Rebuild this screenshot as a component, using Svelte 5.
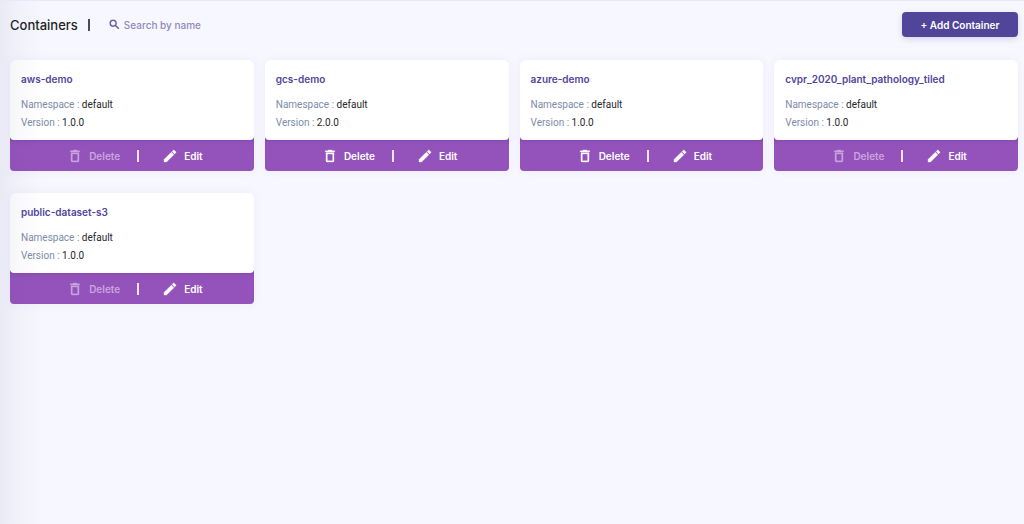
<script lang="ts">
  type Container = {
    name: string;
    namespace: string;
    version: string;
    locked: boolean;
  };

  const containers: Container[] = [
    { name: 'aws-demo', namespace: 'default', version: '1.0.0', locked: true },
    { name: 'gcs-demo', namespace: 'default', version: '2.0.0', locked: false },
    { name: 'azure-demo', namespace: 'default', version: '1.0.0', locked: false },
    { name: 'cvpr_2020_plant_pathology_tiled', namespace: 'default', version: '1.0.0', locked: true },
    { name: 'public-dataset-s3', namespace: 'default', version: '1.0.0', locked: true }
  ];

  let search = $state('');
  let visible = $derived(containers.filter((c) => c.name.includes(search.trim().toLowerCase())));
</script>

<main>
  <header>
    <h1>Containers</h1>
    <span class="bar"></span>
    <label class="search">
      <svg viewBox="0 0 24 24" aria-hidden="true">
        <path d="M15.5 14h-.79l-.28-.27A6.47 6.47 0 0 0 16 9.5 6.5 6.5 0 1 0 9.5 16c1.61 0 3.09-.59 4.23-1.57l.27.28v.79l5 4.99L20.49 19l-4.99-5zm-6 0C7.01 14 5 11.99 5 9.5S7.01 5 9.5 5 14 7.01 14 9.5 11.99 14 9.5 14z" />
      </svg>
      <input type="text" placeholder="Search by name" aria-label="Search by name" bind:value={search}>
    </label>
    <button type="button" class="add">+ Add Container</button>
  </header>

  <section class="grid">
    {#each visible as c (c.name)}
      <article>
        <div class="body">
          <h2>{c.name}</h2>
          <p>Namespace : <span>{c.namespace}</span></p>
          <p>Version : <span>{c.version}</span></p>
        </div>
        <footer>
          <button type="button" class="delete" disabled={c.locked}>
            <svg viewBox="0 0 24 24" aria-hidden="true">
              <path d="M6 19c0 1.1.9 2 2 2h8c1.1 0 2-.9 2-2V7H6v12zM8 9h8v10H8V9zm7.5-5l-1-1h-5l-1 1H5v2h14V4z" />
            </svg>
            Delete
          </button>
          <span class="bar"></span>
          <button type="button" class="edit">
            <svg viewBox="0 0 24 24" aria-hidden="true">
              <path d="M3 17.25V21h3.75L17.81 9.94l-3.75-3.75L3 17.25zM20.71 7.04a1 1 0 0 0 0-1.41l-2.34-2.34a1 1 0 0 0-1.41 0l-1.83 1.83 3.75 3.75 1.83-1.83z" />
            </svg>
            Edit
          </button>
        </footer>
      </article>
    {/each}
  </section>
</main>

<style>
:global(body){background:#f7f7ff}
main{position:relative;box-sizing:border-box;min-height:100vh;padding:11px 6px 24px 10px;border-top:1px solid #eae6fb;font-family:Inter,"Noto Sans",sans-serif;color:#1f1f24}
/* soft shade cast by the side menu */
main::before{content:"";position:absolute;inset:0 auto 0 0;width:44px;background:linear-gradient(90deg,rgba(60,80,110,.08),rgba(60,60,140,.03) 40%,rgba(60,60,140,0));pointer-events:none;z-index:1}
header{display:flex;align-items:center;margin-bottom:23px}
h1{margin:0;font-size:13px;line-height:16px;font-weight:500}
.bar{width:2px;height:12px;background:currentColor}
header .bar{margin:0 18px 0 10px;opacity:.8}
.search{display:flex;align-items:center;gap:3px;color:#5f4f9f}
.search svg{width:13px;height:13px;stroke:currentColor;stroke-width:.5}
svg{fill:currentColor;flex:none}
input{width:160px;padding:0;border:0;outline:0;background:none;font:500 10px/16px Inter,"Noto Sans",sans-serif;color:#5f4f9f}
input::placeholder{color:#9388bd;opacity:1}
button{font:600 10px/16px Inter,"Noto Sans",sans-serif;color:#fff;border:0;cursor:pointer}
.add{margin-left:auto;width:116px;height:25px;padding:0;border-radius:4px;background:#51459a;box-shadow:0 2px 6px rgba(81,69,154,.2)}
.grid{display:grid;grid-template-columns:repeat(4,minmax(0,1fr));gap:22px 11px}
article{border-radius:6px 6px 4px 4px;background:linear-gradient(transparent 77px,#7d3fa8 77px,#8f50b8 82px,#9453bb 86px);box-shadow:0 0 8px rgba(120,100,200,.08)}
.body{padding:11px 11px 8px;border-radius:6px 6px 4px 4px;background:#fff}
h2{margin:0 0 9px;font-size:10px;line-height:16px;font-weight:600;color:#51459a}
p{margin:0;font-family:Roboto,Inter,sans-serif;font-size:10px;line-height:18px;color:#7c8ba8}
p span{color:#26262b}
footer{display:flex;align-items:center;justify-content:center;height:31px;padding-left:6px;color:#fff}
footer button{display:flex;align-items:center;gap:6px;padding:0;background:none}
footer svg{width:16px;height:16px;stroke:currentColor;stroke-width:.5}
footer .bar{margin:0 23px 0 17px;opacity:.85}
button:disabled{color:#c9a5df;cursor:default}
</style>
